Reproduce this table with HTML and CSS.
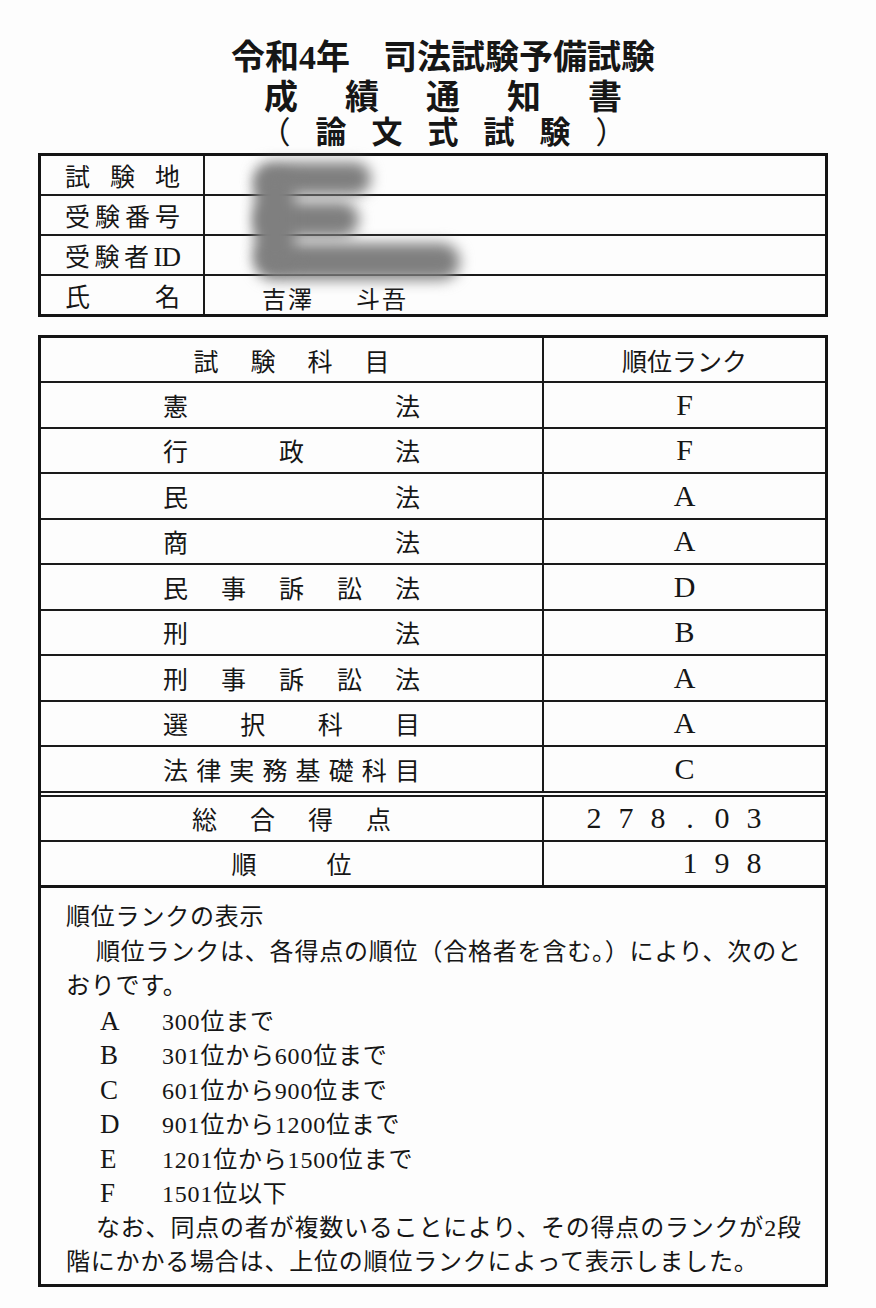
FILE: index.html
```html
<!DOCTYPE html>
<html lang="ja">
<head>
<meta charset="utf-8">
<title>成績通知書</title>
<link rel="stylesheet" href="styles.css">
</head>
<body>
<div class="page">
  <header class="title">
    <div class="t1"><span>令和4年</span><span>司法試験予備試験</span></div>
    <div class="t2"><span>成</span><span>績</span><span>通</span><span>知</span><span>書</span></div>
    <div class="t3"><span class="paren">（</span><span>論</span><span>文</span><span>式</span><span>試</span><span>験</span><span class="paren">）</span></div>
  </header>

  <section class="info">
    <div class="info-row">
      <div class="info-label"><span class="just"><span>試</span><span>験</span><span>地</span></span></div>
      <div class="info-value"></div>
    </div>
    <div class="info-row">
      <div class="info-label"><span class="just"><span>受</span><span>験</span><span>番</span><span>号</span></span></div>
      <div class="info-value"></div>
    </div>
    <div class="info-row">
      <div class="info-label"><span class="just"><span>受</span><span>験</span><span>者</span><span class="latin">ID</span></span></div>
      <div class="info-value"></div>
    </div>
    <div class="info-row">
      <div class="info-label"><span class="just"><span>氏</span><span>名</span></span></div>
      <div class="info-value"><span class="name">吉澤<span class="name-gap"></span>斗吾</span></div>
    </div>
    <div class="redact redact-1"></div>
    <div class="redact redact-2"></div>
    <div class="redact redact-3"></div>
    <div class="redact redact-4"></div>
  </section>

  <section class="scores">
    <div class="s-row s-head">
      <div class="s-subj"><span class="spread spread-head"><span>試</span><span>験</span><span>科</span><span>目</span></span></div>
      <div class="s-val s-val-head">順位ランク</div>
    </div>
    <div class="s-row">
      <div class="s-subj"><span class="just2"><span>憲</span><span>法</span></span></div>
      <div class="s-val rank">F</div>
    </div>
    <div class="s-row">
      <div class="s-subj"><span class="just2"><span>行</span><span>政</span><span>法</span></span></div>
      <div class="s-val rank">F</div>
    </div>
    <div class="s-row">
      <div class="s-subj"><span class="just2"><span>民</span><span>法</span></span></div>
      <div class="s-val rank">A</div>
    </div>
    <div class="s-row">
      <div class="s-subj"><span class="just2"><span>商</span><span>法</span></span></div>
      <div class="s-val rank">A</div>
    </div>
    <div class="s-row">
      <div class="s-subj"><span class="just2"><span>民</span><span>事</span><span>訴</span><span>訟</span><span>法</span></span></div>
      <div class="s-val rank">D</div>
    </div>
    <div class="s-row">
      <div class="s-subj"><span class="just2"><span>刑</span><span>法</span></span></div>
      <div class="s-val rank">B</div>
    </div>
    <div class="s-row">
      <div class="s-subj"><span class="just2"><span>刑</span><span>事</span><span>訴</span><span>訟</span><span>法</span></span></div>
      <div class="s-val rank">A</div>
    </div>
    <div class="s-row">
      <div class="s-subj"><span class="just2"><span>選</span><span>択</span><span>科</span><span>目</span></span></div>
      <div class="s-val rank">A</div>
    </div>
    <div class="s-row">
      <div class="s-subj"><span class="just2"><span>法</span><span>律</span><span>実</span><span>務</span><span>基</span><span>礎</span><span>科</span><span>目</span></span></div>
      <div class="s-val rank">C</div>
    </div>
    <div class="s-row s-total">
      <div class="s-subj"><span class="spread spread-total"><span>総</span><span>合</span><span>得</span><span>点</span></span></div>
      <div class="s-val num"><span>2</span><span>7</span><span>8</span><span>.</span><span>0</span><span>3</span></div>
    </div>
    <div class="s-row">
      <div class="s-subj"><span class="spread spread-rank"><span>順</span><span>位</span></span></div>
      <div class="s-val num"><span>1</span><span>9</span><span>8</span></div>
    </div>
  </section>

  <section class="note">
    <div class="line">順位ランクの表示</div>
    <div class="line indent">順位ランクは、各得点の順位（合格者を含む。）により、次のと</div>
    <div class="line">おりです。</div>
    <div class="line item"><span class="letter">A</span><span>300位まで</span></div>
    <div class="line item"><span class="letter">B</span><span>301位から600位まで</span></div>
    <div class="line item"><span class="letter">C</span><span>601位から900位まで</span></div>
    <div class="line item"><span class="letter">D</span><span>901位から1200位まで</span></div>
    <div class="line item"><span class="letter">E</span><span>1201位から1500位まで</span></div>
    <div class="line item"><span class="letter">F</span><span>1501位以下</span></div>
    <div class="line indent">なお、同点の者が複数いることにより、その得点のランクが2段</div>
    <div class="line">階にかかる場合は、上位の順位ランクによって表示しました。</div>
  </section>
</div>
</body>
</html>
```

FILE: styles.css
```css
html, body {
  margin: 0;
  padding: 0;
  background: #fdfdfd;
}

body {
  color: #161616;
  font-family: "Liberation Serif", "Noto Sans CJK JP", serif;
}

.page {
  width: 790px;
  margin-left: 38px;
  padding-top: 34px;
}

/* ---------- title ---------- */
.title {
  padding-left: 20px;
  font-weight: 700;
}

.t1, .t2, .t3 {
  display: flex;
  justify-content: center;
  align-items: center;
}

.t1 {
  height: 40px;
  font-size: 34px;
  gap: 33px;
}

.t2 {
  height: 40px;
  font-size: 34px;
  gap: 47px;
}

.t3 {
  height: 30px;
  font-size: 31px;
  gap: 25px;
}

.t3 .paren {
  font-weight: 400;
}

/* ---------- info box ---------- */
.info {
  position: relative;
  margin-top: 9px;
  border: 3px solid #141414;
}

.info-row {
  display: flex;
  height: 38px;
}

.info-row + .info-row {
  border-top: 2px solid #1a1a1a;
}

.info-label {
  width: 164px;
  flex: none;
  box-sizing: border-box;
  padding-left: 24px;
  border-right: 2px solid #1a1a1a;
  display: flex;
  align-items: center;
  font-size: 25px;
}

.just {
  display: flex;
  align-items: baseline;
  justify-content: space-between;
  width: 115px;
}

.latin {
  font-size: 27px;
  letter-spacing: -1px;
}

.info-value {
  flex: 1;
  display: flex;
  align-items: center;
  padding-left: 57px;
}

.name {
  font-size: 24px;
  display: flex;
  align-items: center;
  letter-spacing: 2px;
  margin-top: 4px;
}

.name-gap {
  display: inline-block;
  width: 42px;
}

.redact {
  position: absolute;
  background: #7f7f7f;
  border-radius: 20px;
  filter: blur(7px);
}

.redact-1 { left: 214px; top: 6px;  width: 116px; height: 33px; }
.redact-2 { left: 214px; top: 46px; width: 104px; height: 35px; }
.redact-3 { left: 214px; top: 87px; width: 205px; height: 37px; }
.redact-4 { left: 214px; top: 16px; width: 40px;  height: 96px; border-radius: 14px; }

/* ---------- scores ---------- */
.scores {
  margin-top: 18px;
  border: 3px solid #141414;
}

.s-row {
  display: flex;
  height: 43.5px;
}

.s-row + .s-row {
  border-top: 2px solid #1a1a1a;
}

.s-head {
  height: 43px;
}

.s-row.s-total {
  border-top: 6px double #1a1a1a;
  height: 43px;
}

.s-subj {
  width: 503px;
  flex: none;
  box-sizing: border-box;
  border-right: 2px solid #1a1a1a;
  display: flex;
  align-items: center;
  font-size: 25px;
}

.just2 {
  display: flex;
  justify-content: space-between;
  width: 257px;
  margin-left: 122px;
}

.spread {
  display: flex;
  justify-content: center;
  width: 100%;
}

.spread-head  { gap: 32px; }
.spread-total { gap: 33px; }
.spread-rank  { gap: 70px; }

.s-val {
  flex: 1;
  display: flex;
  align-items: center;
  justify-content: center;
}

.s-val-head {
  font-size: 25px;
}

.rank {
  font-size: 30px;
}

.num {
  justify-content: flex-end;
  padding-right: 55px;
  font-size: 30px;
}

.num span {
  width: 32px;
  text-align: center;
}

/* ---------- note ---------- */
.note {
  border: 3px solid #141414;
  border-top: none;
  padding: 12px 0 4px 25px;
  font-size: 24px;
  letter-spacing: 0.8px;
}

.line {
  height: 34.5px;
  line-height: 34.5px;
  white-space: nowrap;
}

.indent {
  padding-left: 30px;
}

.item {
  display: flex;
  align-items: baseline;
  padding-left: 34px;
}

.letter {
  width: 62px;
  font-size: 27px;
}
```
